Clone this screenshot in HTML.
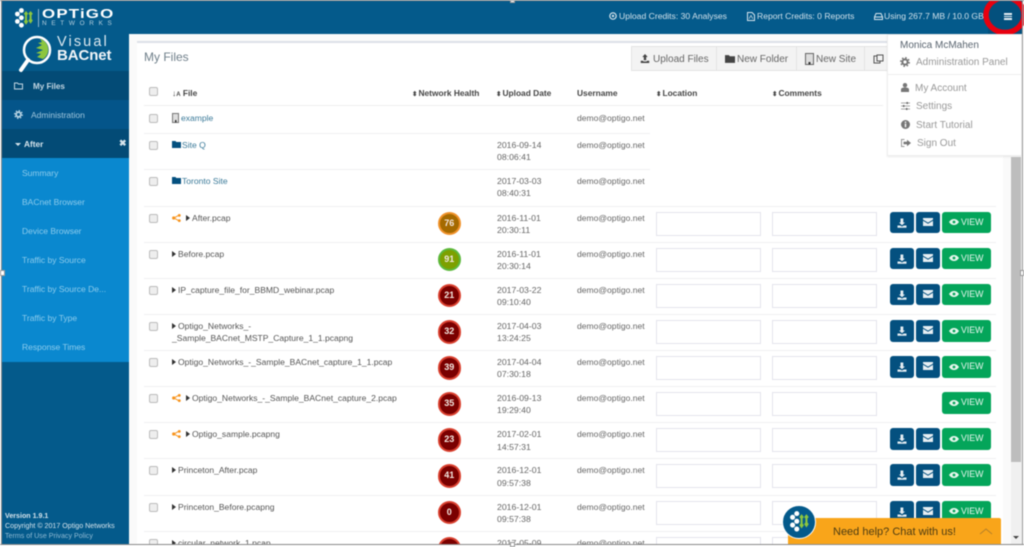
<!DOCTYPE html>
<html><head><meta charset="utf-8"><style>
html,body{margin:0;padding:0;background:#fff}
#p{position:relative;width:1024px;height:547px;overflow:hidden;background:#fff;font-family:"Liberation Sans",sans-serif;font-size:8.55px;color:#5a5a5a;filter:blur(.45px)}
#p *{box-sizing:border-box}
.a,.r>*{position:absolute;white-space:nowrap}
.r{position:absolute;left:0;width:1003px;height:36px}
.sep{left:144px;top:0;height:1px;width:852px;background:#f0f0f2}
.s2{width:506px}
.cb{left:149px;top:8px;width:9px;height:9px;border:1px solid #bcbcbc;border-radius:2px;background:#eee}
.n{left:178px;top:6px;line-height:12px;color:#555}
.n2{left:192px}
.t{left:172px;top:9px;width:0;height:0;border-left:4px solid #333;border-top:3.5px solid transparent;border-bottom:3.5px solid transparent}
.t2{left:186px}
.sh{left:172px;top:8px}
.d{left:497px;top:6px;line-height:12.2px;color:#666;font-size:8.7px}
.u{left:577px;top:6px;line-height:12px;color:#666;font-size:8.55px}
.c{left:437.5px;top:6px;width:23.5px;height:23.5px;border-radius:50%;border:2px solid #d9402f;background:#7a0000;color:#f4e8e0;font-weight:bold;font-size:9px;line-height:19.5px;text-align:center}
.i1,.i2{top:6px;width:105px;height:24px;border:1px solid #e4e4ec;background:#fff}
.i1{left:656px}.i2{left:772px}
.b1,.b2{top:6px;width:24px;height:21.5px;background:#04507f;border-radius:3px}
.b1{left:890px}.b2{left:916px}
.b1 svg,.b2 svg{position:absolute;left:7px;top:6px}
.v{left:942px;top:6px;width:48.5px;height:21.5px;background:#04a55a;border-radius:3px;color:#e9f7ef;font-size:8.8px;line-height:21px;padding-left:19px}
.v svg{position:absolute;left:7px;top:7.5px}
.m{position:absolute;left:2px;width:127px;color:#9fc6dc;font-size:8.5px;line-height:31px;height:29px}
.sub{padding-left:20px;color:#8ccbec;font-size:8.5px}
.h{position:absolute;top:88px;font-weight:bold;font-size:8.4px;color:#444;line-height:11px}
.h i{font-style:normal;font-size:6.5px;margin-right:2px;letter-spacing:-1px}
.dd{position:absolute;color:#999;font-size:10px;line-height:12px}
.tb{position:absolute;top:46px;height:25px;background:#f3f3f3;border:1px solid #e4e4e4;color:#666;font-size:10px;line-height:25px}
</style></head><body><div id="p">
<svg width="0" height="0" style="position:absolute"><defs>
<symbol id="dl" viewBox="0 0 10 10"><path d="M3.5 .5H6.3V4.5H8L5 7.3 2 4.5H3.5Z M.5 7.5H3L5 8.5 7 7.5H9.5V9.8H.5Z" fill="#e6eef3"/></symbol>
<symbol id="ml" viewBox="0 0 10 8"><path d="M0 0H10V1.6L5 4.6 0 1.6Z M0 2.8L5 5.8 10 2.8V8H0Z" fill="#e6eef3"/></symbol>
<symbol id="ey" viewBox="0 0 10 6"><path d="M0 3C2 .3 3.5 0 5 0S8 .3 10 3C8 5.7 6.5 6 5 6S2 5.7 0 3Z" fill="#e6f6ec"/><circle cx="5" cy="3" r="1.4" fill="#04a55a"/></symbol>
<symbol id="sh" viewBox="0 0 9 8"><path d="M7 1.2L2 4 7 6.8" stroke="#f7941e" stroke-width="1" fill="none"/><circle cx="7.3" cy="1.4" r="1.4" fill="#f7941e"/><circle cx="1.7" cy="4" r="1.6" fill="#f7941e"/><circle cx="7.3" cy="6.6" r="1.4" fill="#f7941e"/></symbol>
<symbol id="fo" viewBox="0 0 9 7"><path d="M0 0H3.5L4.3 1H9V7H0Z" fill="#04507f"/></symbol>
<symbol id="gr" viewBox="0 0 10 10"><circle cx="5" cy="5" r="2.6" fill="none" stroke="currentColor" stroke-width="2"/><circle cx="5" cy="5" r="4.2" fill="none" stroke="currentColor" stroke-width="1.5" stroke-dasharray="1.6 1.7"/></symbol>
<symbol id="lg" viewBox="0 0 18 20"><g fill="#fff"><circle cx="6.4" cy="2.5" r="2.4"/><circle cx="2.4" cy="6" r="2.4"/><circle cx="6.4" cy="9.8" r="2.4"/><circle cx="2.4" cy="13.4" r="2.4"/><circle cx="6.4" cy="17.2" r="2.4"/></g><g fill="#8cc63f"><path d="M11 3l2.2 2.8-1.2 1.2V12l1.2 1.5-2.2 3.2-2.2-3.2L10 12V7L8.8 5.8z"/><path d="M15.6 3l2.2 2.8-1.2 1.2V11l1.2 1.5-2.2 3.2-2.2-3.2 1.2-1.5V7l-1.2-1.2z"/></g></symbol>
</defs></svg>

<!-- main background -->
<div class="a" style="left:129px;top:34px;width:882px;height:510px;background:#fafafa"></div>
<div class="a" style="left:137px;top:41px;width:866px;height:503px;background:#fff"></div>
<div class="a" style="left:137px;top:41px;width:866px;height:2px;background:#dde1e8"></div>

<div class="a" style="left:144px;top:50px;font-size:12px;line-height:15px;color:#6f7f8a">My Files</div>

<!-- toolbar -->
<div class="tb" style="left:631px;width:86px;padding-left:21px">Upload Files</div>
<div class="tb" style="left:716px;width:81px;padding-left:20px">New Folder</div>
<div class="tb" style="left:796px;width:69px;padding-left:19px">New Site</div>
<div class="tb" style="left:864px;width:30px"></div>
<svg class="a" style="left:640px;top:54px" width="10" height="9" viewBox="0 0 10 10"><path d="M5 0L8 3.4H6.3V7H3.7V3.4H2Z M.3 7.5H3V8.3H7V7.5H9.7V10H.3Z" fill="#444"/></svg>
<svg class="a" style="left:725px;top:55px" width="10" height="8" viewBox="0 0 9 7"><path d="M0 0H3.5L4.3 1H9V7H0Z" fill="#444"/></svg>
<svg class="a" style="left:805px;top:53px" width="9" height="12" viewBox="0 0 9 12"><rect x=".5" y=".5" width="8" height="11" fill="#ddd" stroke="#666"/><rect x="3.5" y="9" width="2" height="2.5" fill="#333"/></svg>
<svg class="a" style="left:873px;top:54px" width="11" height="10" viewBox="0 0 11 10"><rect x="1" y="2" width="6" height="7" fill="none" stroke="#555"/><rect x="4" y="1" width="6" height="6" fill="#f3f3f3" stroke="#555"/></svg>

<!-- table header -->
<div class="a" style="left:149px;top:87px;width:9px;height:9px;border:1px solid #bcbcbc;border-radius:2px;background:#eee"></div>
<div class="h" style="left:172px">↓<span style="font-size:6px">A</span>&nbsp;File</div>
<div class="h" style="left:412px"><i>⬍</i>Network Health</div>
<div class="h" style="left:496px"><i>⬍</i>Upload Date</div>
<div class="h" style="left:577px">Username</div>
<div class="h" style="left:656px"><i>⬍</i>Location</div>
<div class="h" style="left:772px"><i>⬍</i>Comments</div>
<div class="a" style="left:144px;top:105px;width:739px;height:1px;background:#eee"></div>

<!-- rows -->
<div class="a" style="left:0;top:0;width:1003px;height:544px;overflow:hidden">
<div class="r" style="top:106px"><span class="cb"></span><svg class="a" style="left:172px;top:7px" width="7" height="10" viewBox="0 0 7 10"><rect x=".5" y=".5" width="6" height="9" fill="#ddd" stroke="#777"/><rect x="3" y="7" width="1.5" height="2.5" fill="#333"/></svg><span class="n" style="left:181px;color:#3b7a99;top:6px">example</span><span class="u">demo@optigo.net</span></div>
<div class="r" style="top:133px"><span class="sep s2"></span><span class="cb"></span><svg class="sh" width="9" height="7"><use href="#fo"/></svg><span class="n" style="left:182px;color:#3b7a99">Site Q</span><span class="d">2016-09-14<br>08:06:41</span><span class="u">demo@optigo.net</span></div>
<div class="r" style="top:169px"><span class="sep s2"></span><span class="cb"></span><svg class="sh" width="9" height="7"><use href="#fo"/></svg><span class="n" style="left:182px;color:#3b7a99">Toronto Site</span><span class="d">2017-03-03<br>08:40:31</span><span class="u">demo@optigo.net</span></div>

<div class="r" style="top:205.6px"><span class="sep"></span><span class="cb"></span><svg class="sh" width="9" height="8"><use href="#sh"/></svg><span class="t t2"></span><span class="n n2">After.pcap</span><span class="c" style="background:#a56a00;border-color:#f0922a">76</span><span class="d">2016-11-01<br>20:30:11</span><span class="u">demo@optigo.net</span><span class="i1"></span><span class="i2"></span><span class="b1"><svg width="10" height="10"><use href="#dl"/></svg></span><span class="b2"><svg width="10" height="8"><use href="#ml"/></svg></span><span class="v"><svg width="10" height="6"><use href="#ey"/></svg>VIEW</span></div>
<div class="r" style="top:241.7px"><span class="sep"></span><span class="cb"></span><span class="t"></span><span class="n">Before.pcap</span><span class="c" style="background:#7da000;border-color:#5cb83c">91</span><span class="d">2016-11-01<br>20:30:14</span><span class="u">demo@optigo.net</span><span class="i1"></span><span class="i2"></span><span class="b1"><svg width="10" height="10"><use href="#dl"/></svg></span><span class="b2"><svg width="10" height="8"><use href="#ml"/></svg></span><span class="v"><svg width="10" height="6"><use href="#ey"/></svg>VIEW</span></div>
<div class="r" style="top:277.8px"><span class="sep"></span><span class="cb"></span><span class="t"></span><span class="n">IP_capture_file_for_BBMD_webinar.pcap</span><span class="c">21</span><span class="d">2017-03-22<br>09:10:40</span><span class="u">demo@optigo.net</span><span class="i1"></span><span class="i2"></span><span class="b1"><svg width="10" height="10"><use href="#dl"/></svg></span><span class="b2"><svg width="10" height="8"><use href="#ml"/></svg></span><span class="v"><svg width="10" height="6"><use href="#ey"/></svg>VIEW</span></div>
<div class="r" style="top:314px"><span class="sep"></span><span class="cb"></span><span class="t"></span><span class="n">Optigo_Networks_-</span><span class="n" style="left:172px;top:18px">_Sample_BACnet_MSTP_Capture_1_1.pcapng</span><span class="c">32</span><span class="d">2017-04-03<br>13:24:25</span><span class="u">demo@optigo.net</span><span class="i1"></span><span class="i2"></span><span class="b1"><svg width="10" height="10"><use href="#dl"/></svg></span><span class="b2"><svg width="10" height="8"><use href="#ml"/></svg></span><span class="v"><svg width="10" height="6"><use href="#ey"/></svg>VIEW</span></div>
<div class="r" style="top:350.1px"><span class="sep"></span><span class="cb"></span><span class="t"></span><span class="n">Optigo_Networks_-_Sample_BACnet_capture_1_1.pcap</span><span class="c">39</span><span class="d">2017-04-04<br>07:30:18</span><span class="u">demo@optigo.net</span><span class="i1"></span><span class="i2"></span><span class="b1"><svg width="10" height="10"><use href="#dl"/></svg></span><span class="b2"><svg width="10" height="8"><use href="#ml"/></svg></span><span class="v"><svg width="10" height="6"><use href="#ey"/></svg>VIEW</span></div>
<div class="r" style="top:386.2px"><span class="sep"></span><span class="cb"></span><svg class="sh" width="9" height="8"><use href="#sh"/></svg><span class="t t2"></span><span class="n n2">Optigo_Networks_-_Sample_BACnet_capture_2.pcap</span><span class="c">35</span><span class="d">2016-09-13<br>19:29:40</span><span class="u">demo@optigo.net</span><span class="i1"></span><span class="i2"></span><span class="v"><svg width="10" height="6"><use href="#ey"/></svg>VIEW</span></div>
<div class="r" style="top:422.3px"><span class="sep"></span><span class="cb"></span><svg class="sh" width="9" height="8"><use href="#sh"/></svg><span class="t t2"></span><span class="n n2">Optigo_sample.pcapng</span><span class="c">23</span><span class="d">2017-02-01<br>14:57:31</span><span class="u">demo@optigo.net</span><span class="i1"></span><span class="i2"></span><span class="b1"><svg width="10" height="10"><use href="#dl"/></svg></span><span class="b2"><svg width="10" height="8"><use href="#ml"/></svg></span><span class="v"><svg width="10" height="6"><use href="#ey"/></svg>VIEW</span></div>
<div class="r" style="top:458.4px"><span class="sep"></span><span class="cb"></span><span class="t"></span><span class="n">Princeton_After.pcap</span><span class="c">41</span><span class="d">2016-12-01<br>09:57:38</span><span class="u">demo@optigo.net</span><span class="i1"></span><span class="i2"></span><span class="b1"><svg width="10" height="10"><use href="#dl"/></svg></span><span class="b2"><svg width="10" height="8"><use href="#ml"/></svg></span><span class="v"><svg width="10" height="6"><use href="#ey"/></svg>VIEW</span></div>
<div class="r" style="top:494.5px"><span class="sep"></span><span class="cb"></span><span class="t"></span><span class="n">Princeton_Before.pcapng</span><span class="c">0</span><span class="d">2016-12-01<br>09:57:38</span><span class="u">demo@optigo.net</span><span class="i1"></span><span class="i2"></span><span class="b1"><svg width="10" height="10"><use href="#dl"/></svg></span><span class="b2"><svg width="10" height="8"><use href="#ml"/></svg></span><span class="v"><svg width="10" height="6"><use href="#ey"/></svg>VIEW</span></div>
<div class="r" style="top:530.6px"><span class="sep"></span><span class="cb"></span><span class="t"></span><span class="n">circular_network_1.pcap</span><span class="c"></span><span class="d">2017-05-09</span><span class="u">demo@optigo.net</span><span class="i1"></span><span class="i2"></span></div>
</div>

<!-- sidebar -->
<div class="a" style="left:2px;top:34px;width:127px;height:510px;background:#045a8b"></div>
<div class="m" style="top:71px;background:#034b76;color:#c3d6e2;font-weight:bold;padding-left:31px;font-size:8.1px;">My Files</div>
<div class="m" style="top:100px;background:#04558a;padding-left:29px">Administration</div>
<div class="m" style="top:129px;background:#034b76;color:#d6e4ec;font-weight:bold;padding-left:22px;font-size:8.3px">After</div>
<div class="a" style="left:2px;top:158px;width:127px;height:204px;background:#0a88cf"></div>
<div class="m sub" style="top:158px">Summary</div>
<div class="m sub" style="top:187px">BACnet Browser</div>
<div class="m sub" style="top:216px">Device Browser</div>
<div class="m sub" style="top:245px">Traffic by Source</div>
<div class="m sub" style="top:274px">Traffic by Source De...</div>
<div class="m sub" style="top:303px">Traffic by Type</div>
<div class="m sub" style="top:332px">Response Times</div>
<svg class="a" style="left:14px;top:82px" width="9" height="8" viewBox="0 0 9 7"><path d="M.5 .5H3.5L4.3 1.5H8.5V6.5H.5Z" fill="none" stroke="#c3d6e2"/></svg>
<svg class="a" style="left:14px;top:110px;color:#b5d2e3" width="9" height="9"><use href="#gr"/></svg>
<div class="a" style="left:15px;top:143px;width:0;height:0;border-top:3px solid #d6e4ec;border-left:3px solid transparent;border-right:3px solid transparent"></div>
<div class="a" style="left:119px;top:138px;color:#d6e4ec;font-size:9px;font-weight:bold;line-height:11px">✖</div>

<div class="a" style="left:5px;top:511px;color:#d6e4ec;font-size:7.1px;font-weight:bold;line-height:10px">Version 1.9.1</div>
<div class="a" style="left:5px;top:521px;color:#d6e4ec;font-size:7.1px;line-height:10px">Copyright © 2017 Optigo Networks</div>
<div class="a" style="left:5px;top:531px;color:#8fbad3;font-size:7.1px;line-height:10px">Terms of Use Privacy Policy</div>

<!-- header -->
<div class="a" style="left:2px;top:1px;width:1020px;height:33px;background:#045a8b"></div>
<svg class="a" style="left:15px;top:8px" width="18" height="20"><use href="#lg"/></svg>
<div class="a" style="left:38px;top:9px;width:1px;height:18px;background:#8fb4cb"></div>
<div class="a" style="left:42px;top:7px;color:#fff;font-weight:bold;font-size:13px;letter-spacing:.9px;line-height:14px;transform:scaleX(1.3);transform-origin:left top">OPTiGO</div>
<div class="a" style="left:42px;top:20px;color:#b7d0de;font-size:6.4px;letter-spacing:4.7px;line-height:7px">NETWORKS</div>

<svg class="a" style="left:18px;top:32px" width="36" height="42" viewBox="0 0 36 42"><circle cx="19" cy="18" r="13" fill="#045a8b" stroke="#fff" stroke-width="2.5"/><path d="M22 7A11 11 0 0 1 25 27L19 25L23 22L18 21L25 18L18 16L24 13L20 11L24 10Z" fill="#8cc63f"/><path d="M10 28L3 38" stroke="#fff" stroke-width="4" stroke-linecap="round"/></svg>
<div class="a" style="left:57px;top:35px;color:#dce8ef;font-size:14.5px;letter-spacing:2.1px;line-height:15px">Visual</div>
<div class="a" style="left:57px;top:48px;color:#f2f6f9;font-size:15px;font-weight:bold;letter-spacing:-.1px;line-height:15px">BACnet</div>

<svg class="a" style="left:609px;top:12px" width="8" height="8"><circle cx="4" cy="4" r="3.2" fill="none" stroke="#d6e4ec" stroke-width="1.2"/><circle cx="4" cy="4" r="1.2" fill="#d6e4ec"/></svg>
<div class="a" style="left:619px;top:10px;color:#cfe0ea;font-size:8.6px;line-height:12px">Upload Credits: 30 Analyses</div>
<svg class="a" style="left:747px;top:12px" width="8" height="9"><path d="M.5 .5H5L7.5 3V8.5H.5Z" fill="none" stroke="#d6e4ec"/><path d="M2 6.8L4 3.5 5.8 6.8" fill="none" stroke="#d6e4ec" stroke-width=".7"/></svg>
<div class="a" style="left:757px;top:10px;color:#cfe0ea;font-size:8.6px;line-height:12px">Report Credits: 0 Reports</div>
<svg class="a" style="left:874px;top:13px" width="9" height="7"><path d="M2 .5H7L8.5 4V6.5H.5V4Z M.5 4H8.5" fill="none" stroke="#d6e4ec"/></svg>
<div class="a" style="left:884px;top:10px;color:#cfe0ea;font-size:8.6px;line-height:12px">Using 267.7 MB / 10.0 GB</div>
<div class="a" style="left:988px;top:1px;width:34px;height:33px;background:#03507d"></div>
<div class="a" style="left:1004px;top:13px;width:8px;height:1.6px;background:#e6eef3"></div>
<div class="a" style="left:1004px;top:15.6px;width:8px;height:1.6px;background:#e6eef3"></div>
<div class="a" style="left:1004px;top:18.2px;width:8px;height:1.6px;background:#e6eef3"></div>
<svg class="a" style="left:980px;top:0" width="44" height="38"><ellipse cx="25" cy="15" rx="19" ry="17.5" fill="none" stroke="#e8000f" stroke-width="5.5"/></svg>

<!-- dropdown -->
<div class="a" style="left:887px;top:34px;width:135px;height:122px;background:#fff;border:1px solid #eee;box-shadow:0 1px 2px rgba(0,0,0,.08)"></div>
<div class="dd" style="left:900px;top:40px;color:#5a6570">Monica McMahen</div>
<svg class="a" style="left:900px;top:57px;color:#777" width="10" height="10"><use href="#gr"/></svg>
<div class="dd" style="left:916px;top:57px">Administration Panel</div>
<div class="a" style="left:887px;top:74px;width:135px;height:1px;background:#eee"></div>
<svg class="a" style="left:901px;top:83px" width="8" height="9" viewBox="0 0 8 9"><circle cx="4" cy="2.2" r="2.2" fill="#777"/><path d="M0 9V6.5C0 5 1.5 4.5 4 4.5S8 5 8 6.5V9Z" fill="#777"/></svg>
<div class="dd" style="left:915px;top:83px">My Account</div>
<svg class="a" style="left:901px;top:102px" width="9" height="8" viewBox="0 0 9 8"><path d="M0 1H9M0 4H9M0 7H9" stroke="#888" stroke-width=".8"/><rect x="5.5" y="0" width="1.4" height="2" fill="#666"/><rect x="2" y="3" width="1.4" height="2" fill="#666"/><rect x="5" y="6" width="1.4" height="2" fill="#666"/></svg>
<div class="dd" style="left:916px;top:101px">Settings</div>
<svg class="a" style="left:901px;top:120px" width="9" height="9" viewBox="0 0 9 9"><circle cx="4.5" cy="4.5" r="4.5" fill="#777"/><rect x="3.8" y="1.5" width="1.4" height="1.4" fill="#fff"/><rect x="3.8" y="3.6" width="1.4" height="3.6" fill="#fff"/></svg>
<div class="dd" style="left:916px;top:120px">Start Tutorial</div>
<svg class="a" style="left:901px;top:139px" width="10" height="8" viewBox="0 0 10 8"><path d="M3.5 .5H.5V7.5H3.5" fill="none" stroke="#999"/><path d="M2.5 2.8H6V.8L10 4 6 7.2V5.2H2.5Z" fill="#777"/></svg>
<div class="dd" style="left:917px;top:138px">Sign Out</div>

<!-- scrollbar -->
<div class="a" style="left:1011px;top:156px;width:11px;height:388px;background:#f0f0f0"></div>
<div class="a" style="left:1011px;top:157px;width:9.5px;height:305px;background:#bdbdbd"></div>
<div class="a" style="left:1013px;top:536px;width:0;height:0;border-top:3.5px solid #444;border-left:3px solid transparent;border-right:3px solid transparent"></div>

<!-- chat -->
<div class="a" style="left:788px;top:518px;width:213px;height:27px;background:#f9a51a;border-radius:2px 2px 0 0"></div>
<div class="a" style="left:833px;top:525px;color:#4d3c12;font-size:11px;line-height:14px">Need help? Chat with us!</div>
<svg class="a" style="left:979px;top:527px" width="14" height="9"><path d="M1 7L7 2 13 7" fill="none" stroke="#b5802a" stroke-width="1"/></svg>
<div class="a" style="left:782px;top:505px;width:34px;height:34px;border-radius:50%;background:#045a8b;border:1.5px solid #fff"></div>
<svg class="a" style="left:790px;top:511px" width="19" height="21"><use href="#lg"/></svg>

<!-- frame -->
<div class="a" style="left:0;top:0;width:1024px;height:1px;background:#8a8a8a"></div>
<div class="a" style="left:1px;top:0;width:1px;height:545px;background:#8a8a8a"></div>
<div class="a" style="left:1022px;top:0;width:1px;height:545px;background:#9a9a9a"></div>
<div class="a" style="left:0;top:544px;width:1024px;height:1px;background:#8a8a8a"></div>
<div class="a" style="left:0;top:545px;width:1024px;height:2px;background:#fff"></div>
<div class="a" style="left:0;top:270px;width:5px;height:6px;background:#fff;border:1px solid #999"></div>
<div class="a" style="left:1020px;top:270px;width:4px;height:6px;background:#fff;border:1px solid #999"></div>
<div class="a" style="left:510px;top:0;width:5px;height:3px;background:#fff;border:1px solid #999"></div>
<div class="a" style="left:510px;top:542px;width:5px;height:5px;background:#fff;border:1px solid #999"></div>
</div></body></html>
